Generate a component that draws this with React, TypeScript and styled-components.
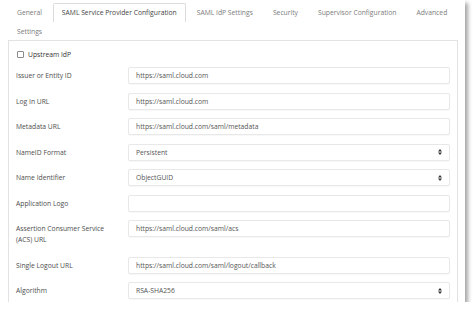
import React, { useState } from 'react'
import styled, { createGlobalStyle } from 'styled-components'

const GlobalStyle = createGlobalStyle`
    body {
        margin: 0;
        background: #ffffff;
        font-family: "Open Sans", "Liberation Sans", sans-serif;
    }
`;

const Window = styled.div`
    width: 465px;
    height: 302px;
    overflow: hidden;
    background: #ffffff;
    box-shadow: 3px 3px 4px rgba(0, 0, 0, 0.35);
    font-size: 6.75px;
    color: #555;
`;

const TabBar = styled.ul`
    display: flex;
    flex-wrap: wrap;
    list-style: none;
    margin: 0;
    padding: 3px 0 0 8px;
`;

const Tab = styled.li<{ $active?: boolean }>`
    box-sizing: border-box;
    height: 18.5px;
    line-height: 18px;
    padding: 0 8px;
    margin-right: 2px;
    white-space: nowrap;
    color: ${(p) => (p.$active ? '#444' : '#7c7c7c')};
    background: ${(p) => (p.$active ? '#fff' : 'transparent')};
    border: 1px solid ${(p) => (p.$active ? '#dcdcdc' : 'transparent')};
    border-bottom: none;
    border-radius: 2px 2px 0 0;
    cursor: pointer;
`;

const Panel = styled.div`
    margin: 0 7px 0 8px;
    border: 1px solid #e2e2e2;
    padding: 8px 7px 10px 7px;
`;

const CheckRow = styled.label`
    display: flex;
    align-items: center;
    gap: 4px;
    height: 11px;
    margin-bottom: 7px;
    color: #333;
`;

const CheckBox = styled.span`
    box-sizing: border-box;
    width: 7px;
    height: 7px;
    margin-left: 1px;
    border: 1px solid #8a8a8a;
    border-radius: 1px;
    background: #fff;
`;

const Row = styled.div`
    display: grid;
    grid-template-columns: 112px 1fr;
    align-items: start;
    margin-bottom: 8.5px;
`;

const Label = styled.div`
    padding: 3px 10px 3px 0;
    line-height: 11px;
    color: #4d4d4d;
`;

const Field = styled.div`
    box-sizing: border-box;
    height: 17px;
    display: flex;
    align-items: center;
    justify-content: space-between;
    padding: 0 7px;
    border: 1px solid #e8e8e8;
    border-radius: 2px;
    background: #fff;
    box-shadow: 0 1px 1px rgba(0, 0, 0, 0.03);
    color: #555;
    white-space: nowrap;
`;

const Arrows = () => (
    <svg width="4" height="6" viewBox="0 0 4 6">
        <path d="M2 0 L4 2.4 L0 2.4 Z M2 6 L4 3.6 L0 3.6 Z" fill="#333" />
    </svg>
);

type FieldRow = { label: string; value: string; select?: boolean };

const rows: FieldRow[] = [
    { label: 'Issuer or Entity ID', value: 'https://saml.cloud.com' },
    { label: 'Log In URL', value: 'https://saml.cloud.com' },
    { label: 'Metadata URL', value: 'https://saml.cloud.com/saml/metadata' },
    { label: 'NameID Format', value: 'Persistent', select: true },
    { label: 'Name Identifier', value: 'ObjectGUID', select: true },
    { label: 'Application Logo', value: '' },
    { label: 'Assertion Consumer Service (ACS) URL', value: 'https://saml.cloud.com/saml/acs' },
    { label: 'Single Logout URL', value: 'https://saml.cloud.com/saml/logout/callback' },
    { label: 'Algorithm', value: 'RSA-SHA256', select: true },
];

const tabs = [
    'General',
    'SAML Service Provider Configuration',
    'SAML IdP Settings',
    'Security',
    'Supervisor Configuration',
    'Advanced',
    'Settings',
];

export default function App() {
    const [active, setActive] = useState<number>(1)

    return (
        <>
            <GlobalStyle />
            <Window>
                <TabBar>
                    {tabs.map((t, i) => (
                        <Tab key={t} $active={i === active} onClick={() => setActive(i)}>
                            {t}
                        </Tab>
                    ))}
                </TabBar>
                <Panel>
                    <CheckRow>
                        <CheckBox />
                        Upstream IdP
                    </CheckRow>
                    {rows.map((r) => (
                        <Row key={r.label}>
                            <Label>{r.label}</Label>
                            <Field>
                                <span>{r.value}</span>
                                {r.select && <Arrows />}
                            </Field>
                        </Row>
                    ))}
                </Panel>
            </Window>
        </>
    );
}
